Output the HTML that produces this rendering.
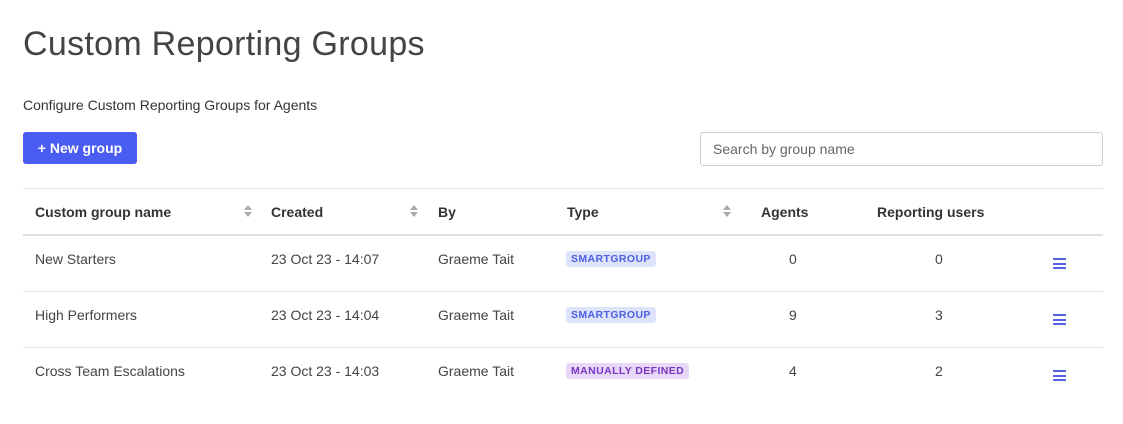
<!DOCTYPE html>
<html><head><style>
body{margin:0;width:1123px;height:424px;background:#fff;font-family:"Liberation Sans",sans-serif;color:#3a3a3a;position:relative;overflow:hidden}
.a{position:absolute;white-space:nowrap}
h1{position:absolute;left:23px;top:25px;margin:0;font-weight:normal;font-size:34px;color:#444;letter-spacing:0.3px}
.btn{left:23px;top:132px;width:114px;height:32px;background:#4a5df2;border-radius:3px;color:#fff;font-size:14px;font-weight:bold;line-height:32px;text-align:center}
.search{left:700px;top:132px;width:401px;height:32px;border:1px solid #ccc;border-radius:3px;font-size:14px;color:#666;line-height:33px;text-indent:12px}
.line{position:absolute;left:23px;width:1080px;height:1px;background:#e2e4e8}
.th{font-size:14px;font-weight:bold;color:#333;top:204px}
.td{font-size:14px;color:#444}
.sort{position:absolute;width:8px;height:14px}
.sort:before,.sort:after{content:"";position:absolute;left:0;border-left:4px solid transparent;border-right:4px solid transparent}
.sort:before{top:0;border-bottom:5px solid #aaa}
.sort:after{top:7px;border-top:5px solid #aaa}
.tag{font-size:10.5px;font-weight:bold;padding:2px 5px;border-radius:3px;letter-spacing:0.4px;line-height:12px}
.sg{background:#dde3fb;color:#4d5fe0}
.md{background:#e7d8f8;color:#7a35c2}
.ham{position:absolute;width:13px;height:11px;border-top:2px solid #5463e0;border-bottom:2px solid #5463e0;box-sizing:border-box}
.ham:after{content:"";position:absolute;left:0;right:0;top:2.5px;height:2px;background:#5463e0}
</style></head><body>
<h1>Custom Reporting Groups</h1>
<div class="a" style="left:23px;top:97px;font-size:14px;color:#333">Configure Custom Reporting Groups for Agents</div>
<div class="a btn">+ New group</div>
<div class="a search">Search by group name</div>
<div class="line" style="top:188px"></div>
<div class="a th" style="left:35px">Custom group name</div>
<div class="sort" style="left:244px;top:205px"></div>
<div class="a th" style="left:271px">Created</div>
<div class="sort" style="left:410px;top:205px"></div>
<div class="a th" style="left:438px">By</div>
<div class="a th" style="left:567px">Type</div>
<div class="sort" style="left:723px;top:205px"></div>
<div class="a th" style="left:761px">Agents</div>
<div class="a th" style="left:877px">Reporting users</div>
<div class="line" style="top:234px;height:2px;background:#dcdfe4"></div>

<div class="a td" style="left:35px;top:251px">New Starters</div>
<div class="a td" style="left:271px;top:251px">23 Oct 23 - 14:07</div>
<div class="a td" style="left:438px;top:251px">Graeme Tait</div>
<div class="a tag sg" style="left:566px;top:251px">SMARTGROUP</div>
<div class="a td" style="left:789px;top:251px">0</div>
<div class="a td" style="left:935px;top:251px">0</div>
<div class="ham" style="left:1053px;top:258px"></div>
<div class="line" style="top:291px"></div>

<div class="a td" style="left:35px;top:307px">High Performers</div>
<div class="a td" style="left:271px;top:307px">23 Oct 23 - 14:04</div>
<div class="a td" style="left:438px;top:307px">Graeme Tait</div>
<div class="a tag sg" style="left:566px;top:307px">SMARTGROUP</div>
<div class="a td" style="left:789px;top:307px">9</div>
<div class="a td" style="left:935px;top:307px">3</div>
<div class="ham" style="left:1053px;top:314px"></div>
<div class="line" style="top:347px"></div>

<div class="a td" style="left:35px;top:363px">Cross Team Escalations</div>
<div class="a td" style="left:271px;top:363px">23 Oct 23 - 14:03</div>
<div class="a td" style="left:438px;top:363px">Graeme Tait</div>
<div class="a tag md" style="left:566px;top:363px">MANUALLY DEFINED</div>
<div class="a td" style="left:789px;top:363px">4</div>
<div class="a td" style="left:935px;top:363px">2</div>
<div class="ham" style="left:1053px;top:370px"></div>
</body></html>
